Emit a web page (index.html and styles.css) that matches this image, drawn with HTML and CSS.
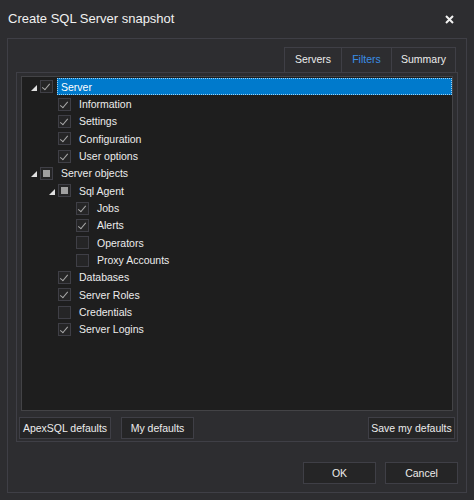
FILE: index.html
```html
<!DOCTYPE html>
<html>
<head>
<meta charset="utf-8">
<link rel="stylesheet" href="styles.css">
</head>
<body>
<div class="window">
  <div class="titlebar">
    <span class="title">Create SQL Server snapshot</span>
    <svg class="close" width="9" height="9" viewBox="0 0 9 9"><path d="M1 1L8 8M8 1L1 8" stroke="#f1f1f1" stroke-width="2"/></svg>
  </div>
  <div class="group">
    <div class="tabs">
      <div class="tab tab-servers">Servers</div>
      <div class="tab tab-filters active">Filters</div>
      <div class="tab tab-summary">Summary</div>
    </div>
    <div class="panel">
      <div class="tree">
        <div class="row lvl0"><span class="exp"><svg width="6" height="6" viewBox="0 0 6 6"><path d="M6 0V6H0Z" fill="#e0e0e0"/></svg></span><span class="cb checked"></span><span class="label selected">Server</span></div>
        <div class="row lvl1"><span class="exp"></span><span class="cb checked"></span><span class="label">Information</span></div>
        <div class="row lvl1"><span class="exp"></span><span class="cb checked"></span><span class="label">Settings</span></div>
        <div class="row lvl1"><span class="exp"></span><span class="cb checked"></span><span class="label">Configuration</span></div>
        <div class="row lvl1"><span class="exp"></span><span class="cb checked"></span><span class="label">User options</span></div>
        <div class="row lvl0"><span class="exp"><svg width="6" height="6" viewBox="0 0 6 6"><path d="M6 0V6H0Z" fill="#e0e0e0"/></svg></span><span class="cb partial"></span><span class="label">Server objects</span></div>
        <div class="row lvl1"><span class="exp"><svg width="6" height="6" viewBox="0 0 6 6"><path d="M6 0V6H0Z" fill="#e0e0e0"/></svg></span><span class="cb partial"></span><span class="label">Sql Agent</span></div>
        <div class="row lvl2"><span class="exp"></span><span class="cb checked"></span><span class="label">Jobs</span></div>
        <div class="row lvl2"><span class="exp"></span><span class="cb checked"></span><span class="label">Alerts</span></div>
        <div class="row lvl2"><span class="exp"></span><span class="cb"></span><span class="label">Operators</span></div>
        <div class="row lvl2"><span class="exp"></span><span class="cb"></span><span class="label">Proxy Accounts</span></div>
        <div class="row lvl1"><span class="exp"></span><span class="cb checked"></span><span class="label">Databases</span></div>
        <div class="row lvl1"><span class="exp"></span><span class="cb checked"></span><span class="label">Server Roles</span></div>
        <div class="row lvl1"><span class="exp"></span><span class="cb"></span><span class="label">Credentials</span></div>
        <div class="row lvl1"><span class="exp"></span><span class="cb checked"></span><span class="label">Server Logins</span></div>
      </div>
      <div class="defaults">
        <div class="btn btn-apex">ApexSQL defaults</div>
        <div class="btn btn-my">My defaults</div>
        <div class="spacer"></div>
        <div class="btn btn-save">Save my defaults</div>
      </div>
    </div>
    <div class="actions">
      <div class="btn btn-action">OK</div>
      <div class="btn btn-action">Cancel</div>
    </div>
  </div>
</div>
</body>
</html>
```
FILE: styles.css
```css
html, body {
  margin: 0;
  padding: 0;
  background: #2d2d30;
}
body {
  font-family: "Liberation Sans", Arial, sans-serif;
  color: #f1f1f1;
}
.window {
  width: 474px;
  height: 500px;
  display: flex;
  flex-direction: column;
  background: #2d2d30;
}
.titlebar {
  height: 38px;
  display: flex;
  align-items: center;
  padding: 0 20px 0 8px;
  box-sizing: border-box;
}
.title {
  flex: 1;
  font-size: 13px;
  color: #f1f1f1;
  margin-top: -1px;
}
.close {
  display: block;
}
.group {
  margin: 0 7px 7px 7px;
  height: 455px;
  box-sizing: border-box;
  border: 1px solid #3f3f46;
  padding: 8px 8px 8px 8px;
  display: flex;
  flex-direction: column;
}
.tabs {
  height: 25px;
  display: flex;
  justify-content: flex-end;
  padding-right: 2px;
}
.tab {
  box-sizing: border-box;
  height: 25px;
  border: 1px solid #3f3f46;
  border-bottom: none;
  display: flex;
  align-items: center;
  justify-content: center;
  font-size: 10.5px;
  color: #ececec;
  padding-bottom: 2px;
}
.tab-servers { width: 58px; }
.tab-filters { width: 50px; border-left: none; }
.tab-summary { width: 64px; border-left: none; }
.tab.active { color: #3a8ee6; }
.panel {
  height: 370px;
  box-sizing: border-box;
  border: 1px solid #3f3f46;
  padding: 3px 2px 2px 2px;
  display: flex;
  flex-direction: column;
}
.tree {
  height: 335px;
  box-sizing: border-box;
  margin: 0 2px;
  border: 1px solid #434346;
  background: #1e1e1e;
  padding-top: 1px;
}
.row {
  height: 17.35px;
  display: flex;
  align-items: center;
  font-size: 10.5px;
  color: #ececec;
}
.lvl0 { padding-left: 9px; }
.lvl1 { padding-left: 27px; }
.lvl2 { padding-left: 45px; }
.exp {
  width: 9px;
  height: 13px;
  flex: none;
  display: flex;
  align-items: center;
}
.exp svg { display: block; margin-top: 2px; }
.cb {
  width: 13px;
  height: 13px;
  box-sizing: border-box;
  border: 1px solid #3f3f46;
  background: #252526;
  flex: none;
  position: relative;
  margin-right: 4px;
}
.cb.checked::after {
  content: "";
  position: absolute;
  left: 3px;
  top: 1px;
  width: 3px;
  height: 7px;
  border-right: 1.2px solid #a8a8a8;
  border-bottom: 1.2px solid #a8a8a8;
  transform: rotate(40deg);
}
.cb.partial::after {
  content: "";
  position: absolute;
  left: 2px;
  top: 2px;
  width: 7px;
  height: 7px;
  background: #a0a0a0;
}
.label {
  box-sizing: border-box;
  height: 17px;
  display: flex;
  align-items: center;
  padding: 0 3px;
  border: 1px solid transparent;
  white-space: nowrap;
}
.label.selected {
  flex: 1;
  background: #007acc;
  border: 1px dotted #9fd0f0;
  color: #ffffff;
}
.defaults {
  display: flex;
  margin-top: 6px;
  height: 22px;
  gap: 10px;
}
.spacer { flex: 1; }
.btn {
  box-sizing: border-box;
  height: 22px;
  border: 1px solid #3f3f46;
  background: #252526;
  display: flex;
  align-items: center;
  justify-content: center;
  font-size: 10.5px;
  color: #ececec;
}
.btn-apex { width: 92px; }
.btn-my { width: 73px; }
.btn-save { width: 87px; }
.actions {
  margin-top: 20px;
  display: flex;
  justify-content: flex-end;
  gap: 9px;
}
.btn-action { width: 73px; }
```
